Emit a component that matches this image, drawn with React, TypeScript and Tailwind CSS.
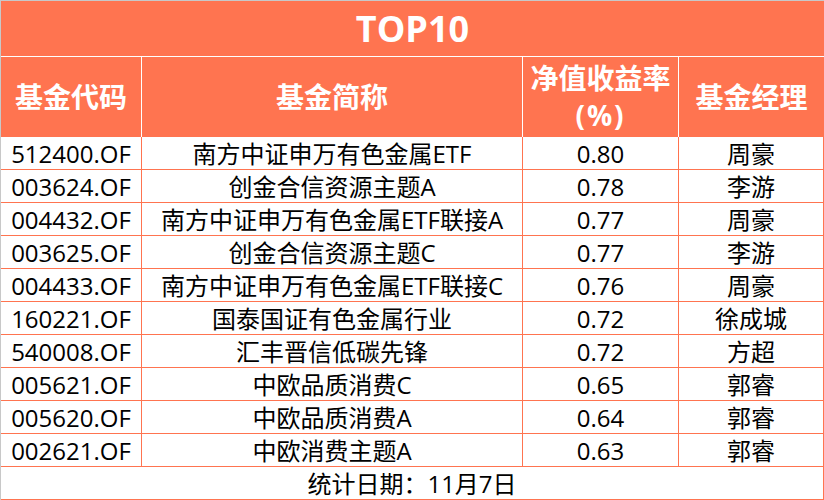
const rows = [
  ["512400.OF", "南方中证申万有色金属ETF", "0.80", "周豪"],
  ["003624.OF", "创金合信资源主题A", "0.78", "李游"],
  ["004432.OF", "南方中证申万有色金属ETF联接A", "0.77", "周豪"],
  ["003625.OF", "创金合信资源主题C", "0.77", "李游"],
  ["004433.OF", "南方中证申万有色金属ETF联接C", "0.76", "周豪"],
  ["160221.OF", "国泰国证有色金属行业", "0.72", "徐成城"],
  ["540008.OF", "汇丰晋信低碳先锋", "0.72", "方超"],
  ["005621.OF", "中欧品质消费C", "0.65", "郭睿"],
  ["005620.OF", "中欧品质消费A", "0.64", "郭睿"],
  ["002621.OF", "中欧消费主题A", "0.63", "郭睿"],
];

const font = { fontFamily: '"Open Sans", "Noto Sans CJK SC", sans-serif' };

export default function App() {
  return (
    <div
      className="w-[824px] h-[500px] bg-white border-t border-l border-[#c8c8c8] text-black"
      style={font}
    >
      <div className="h-[56px] bg-[#ff7450] border-b border-white flex items-center justify-center text-white font-bold text-[36px] leading-none">
        TOP10
      </div>

      <div className="grid grid-cols-[141px_381px_156px_145px] h-[80px] bg-[#ff7450] text-white font-bold text-[28px]">
        <div className="border-r border-white flex items-center justify-center">基金代码</div>
        <div className="border-r border-white flex items-center justify-center">基金简称</div>
        <div className="border-r border-white flex flex-col items-center justify-center leading-[37px]">
          <span>净值收益率</span>
          <span className="tracking-[2px]">(%)</span>
        </div>
        <div className="flex items-center justify-center">基金经理</div>
      </div>

      {rows.map((r) => (
        <div
          key={r[0]}
          className="grid grid-cols-[141px_381px_156px_145px] h-[33px] text-[24px] leading-none"
        >
          {r.map((c, i) => (
            <div
              key={i}
              className="border-r border-b border-[#ff7450] flex items-center justify-center whitespace-nowrap pt-[1px]"
            >
              {c}
            </div>
          ))}
        </div>
      ))}

      <div className="h-[33px] w-[823px] border-r border-b border-[#ff7450] flex items-center justify-center text-[24px] leading-none pt-[1px]">
        统计日期：11月7日
      </div>
    </div>
  );
}
